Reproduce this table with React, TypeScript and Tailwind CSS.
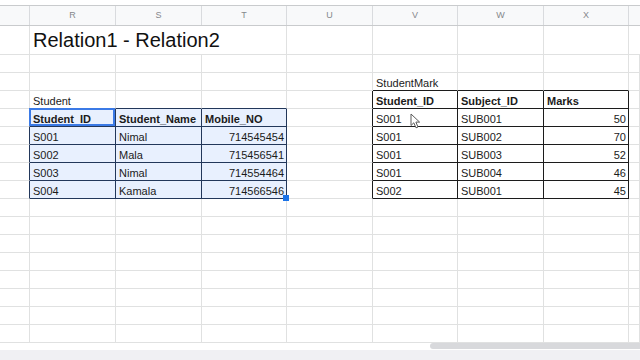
import React from "react";
import clsx from "clsx";

type Cell = { text: string; bold?: boolean; right?: boolean };

const letters = ["", "R", "S", "T", "U", "V", "W", "X", ""];
const cols = "grid grid-cols-[30px_86px_86px_85px_86px_85px_86px_85px_1fr]";

// body rows start right under the title row, 18px each
const data: Record<number, Record<number, Cell>> = {
  1: { 5: { text: "StudentMark" } },
  2: {
    1: { text: "Student" },
    5: { text: "Student_ID", bold: true },
    6: { text: "Subject_ID", bold: true },
    7: { text: "Marks", bold: true },
  },
  3: {
    1: { text: "Student_ID", bold: true },
    2: { text: "Student_Name", bold: true },
    3: { text: "Mobile_NO", bold: true },
    5: { text: "S001" },
    6: { text: "SUB001" },
    7: { text: "50", right: true },
  },
  4: {
    1: { text: "S001" },
    2: { text: "Nimal" },
    3: { text: "714545454", right: true },
    5: { text: "S001" },
    6: { text: "SUB002" },
    7: { text: "70", right: true },
  },
  5: {
    1: { text: "S002" },
    2: { text: "Mala" },
    3: { text: "715456541", right: true },
    5: { text: "S001" },
    6: { text: "SUB003" },
    7: { text: "52", right: true },
  },
  6: {
    1: { text: "S003" },
    2: { text: "Nimal" },
    3: { text: "714554464", right: true },
    5: { text: "S001" },
    6: { text: "SUB004" },
    7: { text: "46", right: true },
  },
  7: {
    1: { text: "S004" },
    2: { text: "Kamala" },
    3: { text: "714566546", right: true },
    5: { text: "S002" },
    6: { text: "SUB001" },
    7: { text: "45", right: true },
  },
};

const inLeft = (r: number, c: number) => r >= 3 && r <= 7 && c >= 1 && c <= 3;
const inRight = (r: number, c: number) => r >= 2 && r <= 7 && c >= 5 && c <= 7;

function bottomColor(r: number, c: number) {
  if (inLeft(r, c) || inLeft(r + 1, c)) return "border-b-[#22375a]";
  if (inRight(r, c) || inRight(r + 1, c)) return "border-b-[#1c1c1c]";
  return "border-b-[#e0e1e1]";
}

function rightColor(r: number, c: number) {
  if (inLeft(r, c) || inLeft(r, c + 1)) return "border-r-[#22375a]";
  if (inRight(r, c) || inRight(r, c + 1)) return "border-r-[#1c1c1c]";
  return "border-r-[#e0e1e1]";
}

function Cursor() {
  return (
    <svg width="11" height="16" viewBox="0 0 11 16" className="absolute left-[37px] top-[4px] z-10 pointer-events-none">
      <path d="M1 1 L1 12.5 L3.8 9.8 L6 14.8 L8 14 L5.9 9.1 L9.6 9.1 Z" fill="#fff" stroke="#5a5a5a" strokeWidth="1" strokeLinejoin="round" />
    </svg>
  );
}

function BodyCell({ r, c }: { r: number; c: number }) {
  const cell = data[r]?.[c];
  return (
    <div
      className={clsx(
        "relative h-[18px] border-b border-r flex items-end pb-[1px] min-w-0 whitespace-nowrap",
        bottomColor(r, c),
        rightColor(r, c),
        inLeft(r, c) && "bg-[#e8f0fe]",
        cell?.right ? "justify-end pr-[2px]" : "pl-[3px]"
      )}
    >
      {cell && (
        <span className={clsx("text-[11px] leading-[12px] text-[#1b1b1b]", cell.bold && "font-bold")}>
          {cell.text}
        </span>
      )}
      {r === 3 && c === 1 && (
        <div className="absolute -left-px -top-px right-0 bottom-0 border-2 border-[#3b7ae6] z-10 pointer-events-none" />
      )}
      {r === 7 && c === 3 && (
        <div className="absolute right-[-3px] bottom-[-3px] w-[6px] h-[6px] bg-[#1a73e8] z-20" />
      )}
      {r === 3 && c === 5 && <Cursor />}
    </div>
  );
}

export default function App() {
  const rows = Array.from({ length: 16 }, (_, i) => i);
  return (
    <div className="w-[640px] h-[360px] overflow-hidden bg-white font-['Liberation_Sans',Arial,sans-serif] flex flex-col">
      <div className="h-[5px] shrink-0" />

      {/* column letters */}
      <div className={clsx(cols, "h-[21px] shrink-0 border-y border-[#c9cbcd] bg-[#f8f9fa]")}>
        {letters.map((l, i) => (
          <div
            key={i}
            className={clsx(
              "flex items-center justify-center text-[9px] text-[#85888c]",
              i < 8 && "border-r border-[#d9dbde]"
            )}
          >
            {l}
          </div>
        ))}
      </div>

      {/* title row */}
      <div className={clsx(cols, "h-[29px] shrink-0")}>
        <div className="border-b border-r border-[#e0e1e1]" />
        <div className="col-span-3 border-b border-r border-[#e0e1e1] flex items-end pl-[3px] pb-[2px]">
          <span className="text-[20px] leading-[23px] text-[#111]">Relation1 - Relation2</span>
        </div>
        {[4, 5, 6, 7, 8].map((c) => (
          <div key={c} className={clsx("border-b border-[#e0e1e1]", c < 8 && "border-r")} />
        ))}
      </div>

      {/* sheet body */}
      {rows.map((r) => (
        <div key={r} className={clsx(cols, "shrink-0")}>
          {letters.map((_, c) => (
            <BodyCell key={c} r={r} c={c} />
          ))}
        </div>
      ))}

      {/* horizontal scrollbar */}
      <div className="h-[7px] shrink-0 flex justify-end">
        <div className="w-[210px] h-[6px] rounded-l-full bg-[#d8d9dc]" />
      </div>
      <div className="flex-1 bg-[#f0f0f3]" />
    </div>
  );
}
